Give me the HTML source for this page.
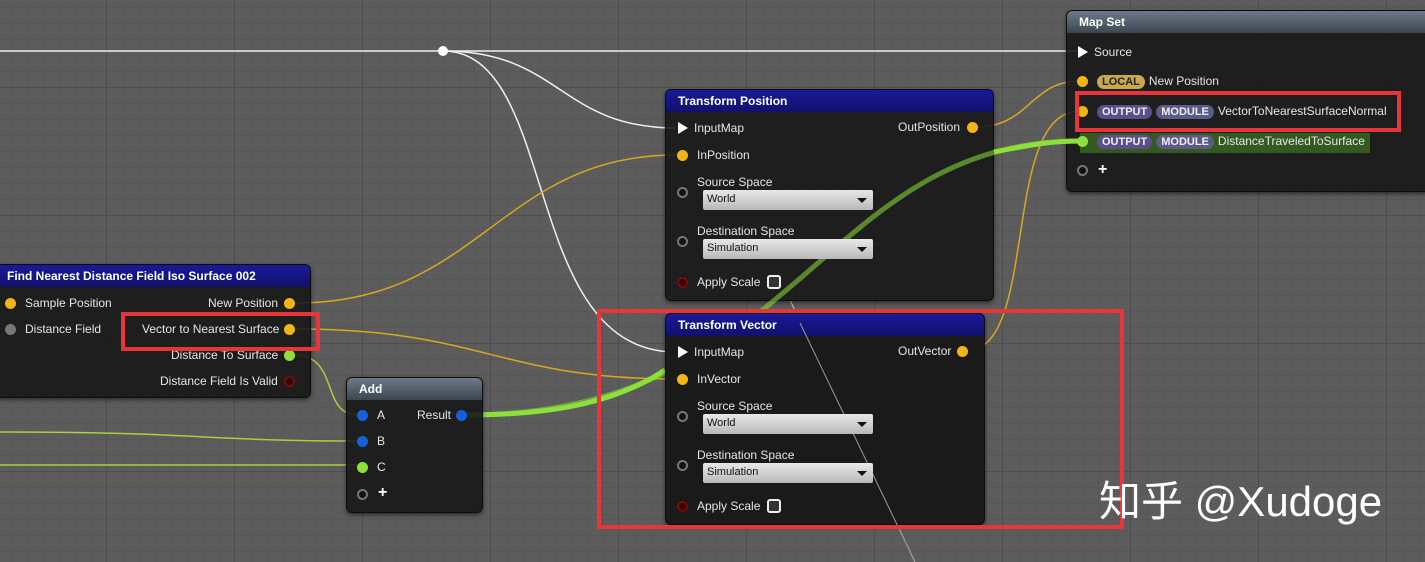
<!DOCTYPE html>
<html><head><meta charset="utf-8"><style>
*{margin:0;padding:0;box-sizing:border-box}
body{width:1425px;height:562px;overflow:hidden;background:#5c5c5c;font-family:"Liberation Sans",sans-serif;position:relative;color:#e6e6e6;font-size:12px}
.grid{position:absolute;inset:0;background-image:linear-gradient(#4e4e4e 1px,transparent 1px),linear-gradient(90deg,#4e4e4e 1px,transparent 1px),linear-gradient(#575757 1px,transparent 1px),linear-gradient(90deg,#575757 1px,transparent 1px);background-size:128px 128px,128px 128px,16px 16px,16px 16px;background-position:0 -41px,-22px 0,0 -41px,-22px 0}
svg.w{position:absolute;left:0;top:0}
.node{position:absolute;background:rgba(22,22,22,.88);border:1px solid #0c0c0c;border-radius:6px;box-shadow:0 2px 4px rgba(0,0,0,.5)}
.op{background:#1a1a1a}
.hd{height:22px;border-radius:5px 5px 0 0;font-weight:bold;font-size:12px;color:#fff;padding:4px 0 0 12px}
.blue{background:linear-gradient(#1a1a9a,#11116a)}
.grey{background:linear-gradient(#6c7a88,#3c4650)}
.t{position:absolute;white-space:nowrap;font-size:12px;color:#e6e6e6}
.pin{position:absolute;width:11px;height:11px;border-radius:50%}
.y{background:#f1b515}.g{background:#8be03a}.b{background:#1560e0}.gr{background:#777}.e{border:2px solid #777;background:#111}.r{border:2px solid #7a0a0a;background:#300}
.exe{position:absolute;width:0;height:0}
.dd{position:absolute;width:170px;height:20px;background:linear-gradient(#e8e8e8,#b8b8b8);border-radius:2px;color:#111;font-size:11px;padding:3px 0 0 4px}
.dd:after{content:"";position:absolute;right:6px;top:8px;border:5px solid transparent;border-top:5px solid #111;border-bottom:0}
.cb{position:absolute;width:14px;height:14px;border:2px solid #eee;border-radius:3px;background:#333}
.red{position:absolute;border:4px solid #e8353a}
.tag{display:inline-block;border-radius:8px;padding:1px 5px;font-size:11px;font-weight:bold;margin-right:4px}
.plus{position:absolute;color:#fff;font-weight:bold;font-size:16px}
</style></head><body>
<div class="grid"></div>
<svg class="w" width="1425" height="562">
<g fill="none">
<path d="M0 51 H1078" stroke="#f0f0f0" stroke-width="1.5"/>
<path d="M443 51 C560 51 560 128 676 128" stroke="#f0f0f0" stroke-width="1.5"/>
<path d="M443 51 C560 51 520 352 676 352" stroke="#f0f0f0" stroke-width="1.5"/>
<path d="M790 300 L915 562" stroke="#cfcfcf" stroke-width="1"/>
<path d="M296 303 C480 303 500 155 676 155" stroke="#d6a820" stroke-width="1.5"/>
<path d="M296 329 C480 329 500 379 676 379" stroke="#d6a820" stroke-width="1.5"/>
<path d="M976 127 C1030 127 1030 81 1080 81" stroke="#d6a820" stroke-width="1.5"/>
<path d="M966 351 C1040 351 1000 111 1080 111" stroke="#d6a820" stroke-width="1.5"/>
<path d="M294 355 C340 355 320 415 358 415" stroke="#a8d040" stroke-width="1.5"/>
<path d="M0 432 C200 432 200 441 358 441" stroke="#a8d040" stroke-width="1.5"/>
<path d="M0 465 H358" stroke="#a8d040" stroke-width="1.5"/>
</g>
<circle cx="443" cy="51" r="5" fill="#fff"/>
</svg>

<!-- Map Set -->
<div class="node" style="left:1066px;top:10px;width:370px;height:182px">
<div class="hd grey">Map Set</div></div>
<div class="exe" style="left:1078px;top:46px;border-left:10px solid #fff;border-top:6px solid transparent;border-bottom:6px solid transparent"></div>
<div class="t" style="left:1094px;top:45px">Source</div>
<div class="pin y" style="left:1077px;top:76px"></div>
<div class="t" style="left:1097px;top:74px"><span class="tag" style="background:#c9a850;color:#222">LOCAL</span>New Position</div>
<div class="pin y" style="left:1077px;top:106px"></div>
<div class="t" style="left:1097px;top:104px"><span class="tag" style="background:#5b4f8a;color:#eee">OUTPUT</span><span class="tag" style="background:#5b5b8a;color:#eee">MODULE</span>VectorToNearestSurfaceNormal</div>
<div style="position:absolute;left:1080px;top:133px;width:290px;height:20px;background:#355a20"></div>
<div class="pin g" style="left:1077px;top:136px"></div>
<div class="t" style="left:1097px;top:134px"><span class="tag" style="background:#5b4f8a;color:#eee">OUTPUT</span><span class="tag" style="background:#5b5b8a;color:#eee">MODULE</span>DistanceTraveledToSurface</div>
<div class="pin e" style="left:1077px;top:165px"></div>
<div class="plus" style="left:1098px;top:161px">+</div>
<div class="red" style="left:1075px;top:91px;width:326px;height:41px"></div>

<!-- Transform Position -->
<div class="node" style="left:665px;top:89px;width:329px;height:212px"><div class="hd blue">Transform Position</div></div>
<div class="exe" style="left:678px;top:122px;border-left:10px solid #fff;border-top:6px solid transparent;border-bottom:6px solid transparent"></div>
<div class="t" style="left:694px;top:121px">InputMap</div>
<div class="t" style="left:898px;top:120px">OutPosition</div><div class="pin y" style="left:967px;top:122px"></div>
<div class="pin y" style="left:677px;top:150px"></div><div class="t" style="left:697px;top:148px">InPosition</div>
<div class="t" style="left:697px;top:175px">Source Space</div><div class="pin e" style="left:677px;top:187px"></div>
<div class="t" style="left:697px;top:224px">Destination Space</div><div class="pin e" style="left:677px;top:236px"></div>
<div class="pin r" style="left:677px;top:277px"></div><div class="t" style="left:697px;top:275px">Apply Scale</div><div class="cb" style="left:767px;top:275px"></div>

<svg class="w" width="1425" height="562">
<path d="M466 415 C800 415 820 141 1080 141" stroke="#8be03a" stroke-width="5" fill="none" opacity=".55"/>
<path d="M466 415 C560 415 620 400 665 370 M994 152 C1030 145 1050 141 1080 141" stroke="#8be03a" stroke-width="5" fill="none"/>
</svg>

<div class="dd" style="left:703px;top:190px">World</div>
<div class="dd" style="left:703px;top:239px">Simulation</div>

<!-- Transform Vector -->
<div class="node op" style="left:665px;top:313px;width:320px;height:212px"><div class="hd blue">Transform Vector</div></div>
<svg class="w" width="1425" height="562"><path d="M800 323 L915 562" stroke="#9a9a9a" stroke-width="1" fill="none"/></svg>
<div class="exe" style="left:678px;top:346px;border-left:10px solid #fff;border-top:6px solid transparent;border-bottom:6px solid transparent"></div>
<div class="t" style="left:694px;top:345px">InputMap</div>
<div class="t" style="left:898px;top:344px">OutVector</div><div class="pin y" style="left:957px;top:346px"></div>
<div class="pin y" style="left:677px;top:374px"></div><div class="t" style="left:697px;top:372px">InVector</div>
<div class="t" style="left:697px;top:399px">Source Space</div><div class="pin e" style="left:677px;top:411px"></div>
<div class="dd" style="left:703px;top:414px">World</div>
<div class="t" style="left:697px;top:448px">Destination Space</div><div class="pin e" style="left:677px;top:460px"></div>
<div class="dd" style="left:703px;top:463px">Simulation</div>
<div class="pin r" style="left:677px;top:501px"></div><div class="t" style="left:697px;top:499px">Apply Scale</div><div class="cb" style="left:767px;top:499px"></div>
<div class="red" style="left:597px;top:309px;width:527px;height:220px"></div>

<!-- Find Nearest -->
<div class="node" style="left:-10px;top:264px;width:321px;height:134px"><div class="hd blue" style="padding-left:16px">Find Nearest Distance Field Iso Surface 002</div></div>
<div class="pin y" style="left:5px;top:298px"></div><div class="t" style="left:25px;top:296px">Sample Position</div>
<div class="pin gr" style="left:5px;top:324px"></div><div class="t" style="left:25px;top:322px">Distance Field</div>
<div class="t" style="left:208px;top:296px">New Position</div><div class="pin y" style="left:284px;top:298px"></div>
<div class="t" style="left:142px;top:322px">Vector to Nearest Surface</div><div class="pin y" style="left:284px;top:324px"></div>
<div class="t" style="left:171px;top:348px">Distance To Surface</div><div class="pin g" style="left:284px;top:350px"></div>
<div class="t" style="left:160px;top:374px">Distance Field Is Valid</div><div class="pin r" style="left:284px;top:376px"></div>
<div class="red" style="left:121px;top:312px;width:199px;height:39px"></div>

<!-- Add -->
<div class="node" style="left:346px;top:377px;width:137px;height:136px"><div class="hd grey">Add</div></div>
<div class="pin b" style="left:357px;top:410px"></div><div class="t" style="left:377px;top:408px">A</div>
<div class="t" style="left:417px;top:408px">Result</div><div class="pin b" style="left:456px;top:410px"></div>
<div class="pin b" style="left:357px;top:436px"></div><div class="t" style="left:377px;top:434px">B</div>
<div class="pin g" style="left:357px;top:462px"></div><div class="t" style="left:377px;top:460px">C</div>
<div class="pin e" style="left:357px;top:489px"></div><div class="plus" style="left:378px;top:484px">+</div>

<div class="t" style="left:1099px;top:468px;font-size:42px;color:#fff;font-family:'Liberation Sans','Noto Sans CJK SC',sans-serif">知乎 @Xudoge</div>
</body></html>
